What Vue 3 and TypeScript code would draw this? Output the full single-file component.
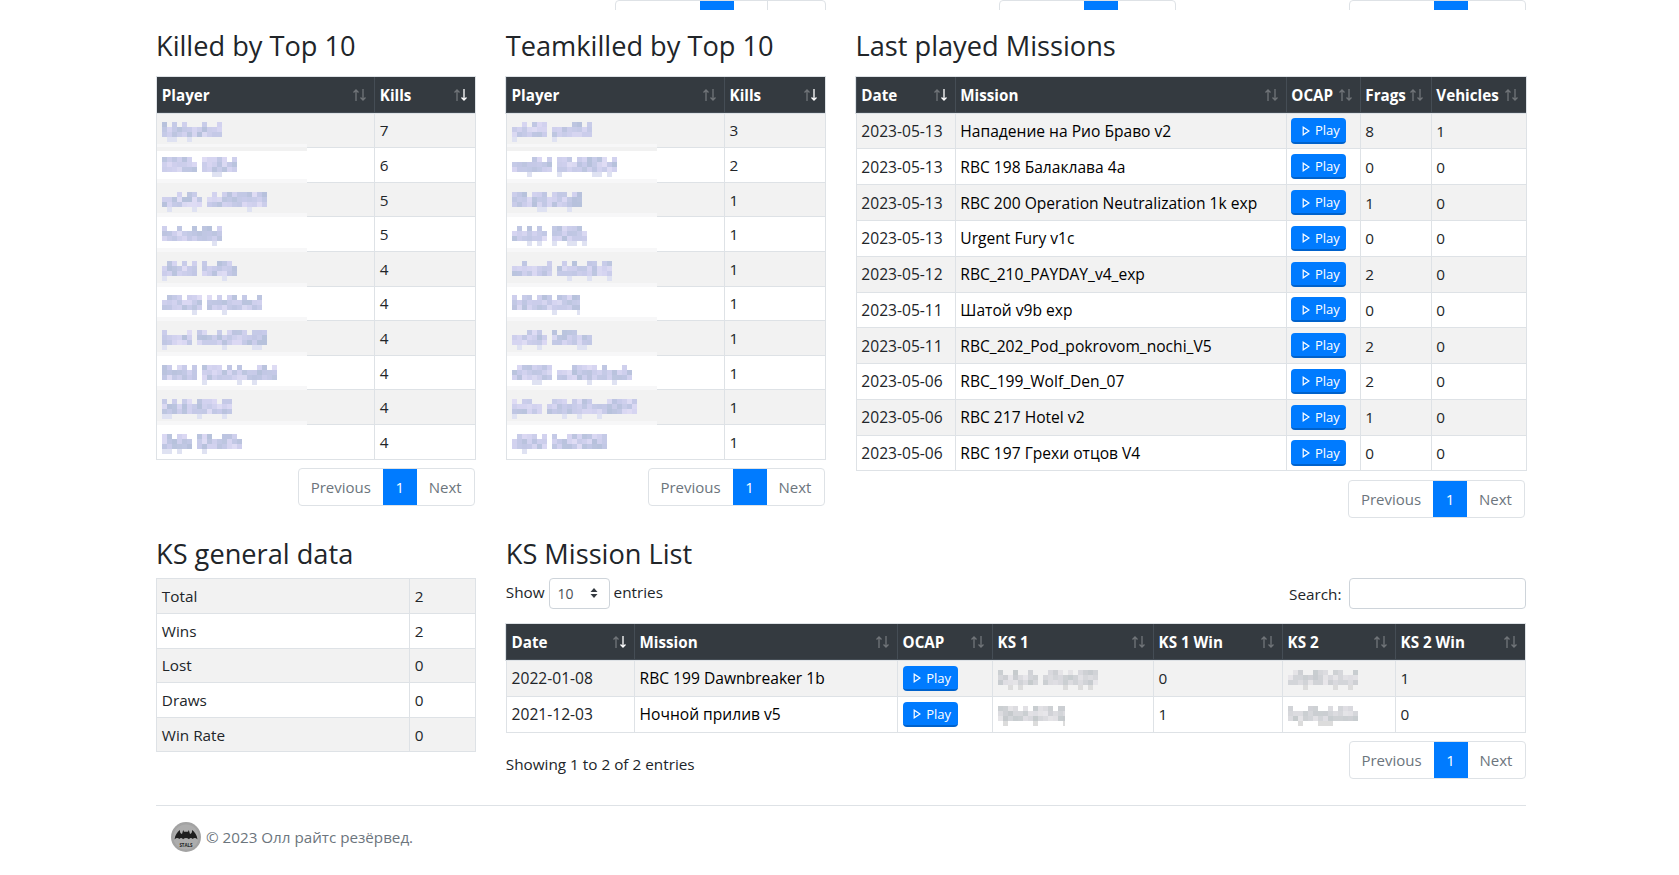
<template>
  <div class="page">
    <!-- bottom edge of the paginations from the row above (page is scrolled) -->
    <div class="top-row">
      <div></div>
      <div class="top-cell"><nav class="pager"><span class="pg prev"></span><span class="pg num active"></span><span class="pg num"></span><span class="pg next"></span></nav></div>
      <div class="top-cell"><nav class="pager"><span class="pg prev"></span><span class="pg num active"></span><span class="pg next"></span></nav></div>
      <div class="top-cell"><nav class="pager"><span class="pg prev"></span><span class="pg num active"></span><span class="pg next"></span></nav></div>
    </div>

    <div class="row-one">
      <section v-for="board in boards" :key="board.title">
        <h3>{{ board.title }}</h3>
        <table class="dt">
          <colgroup><col style="width: 218px" /><col /></colgroup>
          <thead>
            <tr>
              <th v-for="col in ['Player', 'Kills']" :key="col">
                <div class="th-in">
                  <span>{{ col }}</span>
                  <svg class="sort" viewBox="0 0 13 12" width="13" height="12">
                    <path class="dim" d="M3 12V1M.5 3.5 3 1l2.5 2.5" />
                    <path :class="col === 'Kills' ? 'lit' : 'dim'" d="M10 0v11M7.5 8.5 10 11l2.5-2.5" />
                  </svg>
                </div>
              </th>
            </tr>
          </thead>
          <tbody>
            <tr v-for="(row, i) in board.rows" :key="i">
              <td class="name" :class="{ band: i < 9, grey: i === 1 }">
                <svg class="mosaic" :width="row.w" height="24">
                  <rect v-for="(c, k) in mosaic(row.w, i + board.seed, false)" :key="k" :x="c.x" :y="c.y" width="5" height="5" :fill="c.fill" />
                </svg>
              </td>
              <td>{{ row.kills }}</td>
            </tr>
          </tbody>
        </table>
        <div class="pager-row">
          <nav class="pager"><span class="pg prev">Previous</span><span class="pg num active">1</span><span class="pg next">Next</span></nav>
        </div>
      </section>

      <section>
        <h3>Last played Missions</h3>
        <table class="dt tall">
          <colgroup><col v-for="col in missionCols" :key="col.label" :style="{ width: col.width + 'px' }" /></colgroup>
          <thead>
            <tr>
              <th v-for="col in missionCols" :key="col.label">
                <div class="th-in">
                  <span>{{ col.label }}</span>
                  <svg class="sort" viewBox="0 0 13 12" width="13" height="12">
                    <path class="dim" d="M3 12V1M.5 3.5 3 1l2.5 2.5" />
                    <path :class="col.label === 'Date' ? 'lit' : 'dim'" d="M10 0v11M7.5 8.5 10 11l2.5-2.5" />
                  </svg>
                </div>
              </th>
            </tr>
          </thead>
          <tbody>
            <tr v-for="m in missions" :key="m.name">
              <td class="date">{{ m.date }}</td>
              <td class="mission">{{ m.name }}</td>
              <td>
                <a class="play">
                  <svg viewBox="0 0 8 10" width="8" height="10"><path d="M1.2 1.2v7.6L7 5z" /></svg>
                  Play
                </a>
              </td>
              <td>{{ m.frags }}</td>
              <td>{{ m.vehicles }}</td>
            </tr>
          </tbody>
        </table>
        <div class="pager-row wide">
          <nav class="pager"><span class="pg prev">Previous</span><span class="pg num active">1</span><span class="pg next">Next</span></nav>
        </div>
      </section>
    </div>

    <div class="row-two">
      <section>
        <h3 class="tight">KS general data</h3>
        <table class="dt">
          <colgroup><col style="width: 253px" /><col /></colgroup>
          <tbody>
            <tr v-for="g in general" :key="g.label">
              <td>{{ g.label }}</td>
              <td>{{ g.value }}</td>
            </tr>
          </tbody>
        </table>
      </section>

      <section>
        <h3 class="tight">KS Mission List</h3>
        <div class="controls">
          <label class="length">
            <span class="lbl">Show</span>
            <span class="select-wrap">
              <select><option>10</option></select>
              <svg viewBox="0 0 8 12" width="8" height="12"><path d="M4 1 7.500 5h-7zM4 11 .5 7h7z" /></svg>
            </span>
            <span class="lbl">entries</span>
          </label>
          <label class="search">Search: <input type="text" /></label>
        </div>
        <table class="dt tall ks">
          <colgroup><col v-for="col in ksCols" :key="col.label" :style="{ width: col.width + 'px' }" /></colgroup>
          <thead>
            <tr>
              <th v-for="col in ksCols" :key="col.label">
                <div class="th-in">
                  <span>{{ col.label }}</span>
                  <svg class="sort" viewBox="0 0 13 12" width="13" height="12">
                    <path class="dim" d="M3 12V1M.5 3.5 3 1l2.5 2.5" />
                    <path :class="col.label === 'Date' ? 'lit' : 'dim'" d="M10 0v11M7.5 8.5 10 11l2.5-2.5" />
                  </svg>
                </div>
              </th>
            </tr>
          </thead>
          <tbody>
            <tr v-for="(k, i) in ksRows" :key="k.name">
              <td class="date">{{ k.date }}</td>
              <td class="mission">{{ k.name }}</td>
              <td>
                <a class="play">
                  <svg viewBox="0 0 8 10" width="8" height="10"><path d="M1.2 1.2v7.6L7 5z" /></svg>
                  Play
                </a>
              </td>
              <td class="name">
                <svg class="mosaic" :width="k.w1" height="24">
                  <rect v-for="(c, n) in mosaic(k.w1, i + 41, true)" :key="n" :x="c.x" :y="c.y" width="5" height="5" :fill="c.fill" />
                </svg>
              </td>
              <td>{{ k.win1 }}</td>
              <td class="name">
                <svg class="mosaic" :width="k.w2" height="24">
                  <rect v-for="(c, n) in mosaic(k.w2, i + 57, true)" :key="n" :x="c.x" :y="c.y" width="5" height="5" :fill="c.fill" />
                </svg>
              </td>
              <td>{{ k.win2 }}</td>
            </tr>
          </tbody>
        </table>
        <div class="table-foot">
          <div class="info">Showing 1 to 2 of 2 entries</div>
          <nav class="pager"><span class="pg prev">Previous</span><span class="pg num active">1</span><span class="pg next">Next</span></nav>
        </div>
      </section>
    </div>

    <hr />
    <footer>
      <svg class="logo" viewBox="0 0 30 30" width="30" height="30">
        <circle cx="15" cy="15" r="15" fill="#a3a3a3" />
        <circle cx="15" cy="15" r="12.6" fill="#adadad" />
        <path d="M3.500 17.500C4 13 6.500 9.500 9 8 8.700 10 9.500 11.800 11 12L12.200 8 13 9.700h4l.8-1.700L19 12c1.500-.2 2.300-2 2-4 2.500 1.500 5 5 5.500 9.500-1.500-1.800-3.500-2-4.800-.6-1.200-1.300-2.700-1.200-3.700.3-1-.8-2-1.100-3-1.100s-2 .3-3 1.100c-1-1.500-2.500-1.600-3.700-.3C7 15.500 5 15.700 3.500 17.500z" fill="#1f1f1f" />
        <text x="15" y="24.500" text-anchor="middle" class="logo-text">STALS</text>
      </svg>
      <span>© 2023 Олл райтс резёрвед.</span>
    </footer>
  </div>
</template>

<script setup lang="ts">
interface MissionRow {
  date: string
  name: string
  frags: number
  vehicles: number
}

const killedWidths = [60, 75, 105, 60, 75, 100, 105, 115, 70, 80]
const killedCounts = [7, 6, 5, 5, 4, 4, 4, 4, 4, 4]
const teamWidths = [80, 105, 70, 75, 100, 68, 80, 120, 125, 95]
const teamCounts = [3, 2, 1, 1, 1, 1, 1, 1, 1, 1]

const boards = [
  { title: 'Killed by Top 10', seed: 3, rows: killedWidths.map((w, i) => ({ w, kills: killedCounts[i] })) },
  { title: 'Teamkilled by Top 10', seed: 19, rows: teamWidths.map((w, i) => ({ w, kills: teamCounts[i] })) }
]

const missionCols = [
  { label: 'Date', width: 99 },
  { label: 'Mission', width: 331 },
  { label: 'OCAP', width: 74 },
  { label: 'Frags', width: 71 },
  { label: 'Vehicles', width: 95 }
]

const missions: MissionRow[] = [
  { date: '2023-05-13', name: 'Нападение на Рио Браво v2', frags: 8, vehicles: 1 },
  { date: '2023-05-13', name: 'RBC 198 Балаклава 4а', frags: 0, vehicles: 0 },
  { date: '2023-05-13', name: 'RBC 200 Operation Neutralization 1k exp', frags: 1, vehicles: 0 },
  { date: '2023-05-13', name: 'Urgent Fury v1c', frags: 0, vehicles: 0 },
  { date: '2023-05-12', name: 'RBC_210_PAYDAY_v4_exp', frags: 2, vehicles: 0 },
  { date: '2023-05-11', name: 'Шатой v9b exp', frags: 0, vehicles: 0 },
  { date: '2023-05-11', name: 'RBC_202_Pod_pokrovom_nochi_V5', frags: 2, vehicles: 0 },
  { date: '2023-05-06', name: 'RBC_199_Wolf_Den_07', frags: 2, vehicles: 0 },
  { date: '2023-05-06', name: 'RBC 217 Hotel v2', frags: 1, vehicles: 0 },
  { date: '2023-05-06', name: 'RBC 197 Грехи отцов V4', frags: 0, vehicles: 0 }
]

const general = [
  { label: 'Total', value: 2 },
  { label: 'Wins', value: 2 },
  { label: 'Lost', value: 0 },
  { label: 'Draws', value: 0 },
  { label: 'Win Rate', value: 0 }
]

const ksCols = [
  { label: 'Date', width: 128 },
  { label: 'Mission', width: 263 },
  { label: 'OCAP', width: 95 },
  { label: 'KS 1', width: 161 },
  { label: 'KS 1 Win', width: 129 },
  { label: 'KS 2', width: 113 },
  { label: 'KS 2 Win', width: 130 }
]

const ksRows = [
  { date: '2022-01-08', name: 'RBC 199 Dawnbreaker 1b', w1: 100, win1: 0, w2: 70, win2: 1 },
  { date: '2021-12-03', name: 'Ночной прилив v5', w1: 67, win1: 1, w2: 70, win2: 0 }
]

// pixelated blur over player names: 5px cells, seeded so it stays stable
const mosaic = (width: number, seed: number, grey: boolean) => {
  let s = seed * 7919 + width
  const next = () => {
    s = (s * 16807) % 2147483647
    return (s % 1000) / 1000
  }
  const gapAt = width > 70 ? 30 + (seed % 3) * 5 : -100
  const cells: { x: number; y: number; fill: string }[] = []
  for (let x = 0; x < width; x += 5) {
    if (x === gapAt) continue
    for (let y = 4; y < 19; y += 5) {
      if (y === 4 && next() > 0.6) continue
      const r = next()
      const light = 79 + Math.round(r * 12)
      const fill = grey
        ? `hsl(${200 + Math.round(r * 60)}, 7%, ${light}%)`
        : `hsl(${222 + Math.round(r * 24)}, ${34 + Math.round(r * 18)}%, ${light}%)`
      cells.push({ x, y, fill })
    }
    if (next() > 0.8) {
      cells.push({ x, y: 19, fill: grey ? '#dcdcdc' : '#dfe2f2' })
    }
  }
  return cells
}
</script>

<style>
html,
body {
  margin: 0;
  background: #fff;
  overflow: hidden;
}
</style>

<style scoped>
.page {
  width: 1369.5px;
  margin-left: 156px;
  font-family: "Open Sans", "Noto Sans", sans-serif;
  font-size: 15.3px;
  line-height: 24px;
  color: #212529;
}

.top-row {
  display: grid;
  grid-template-columns: repeat(4, 1fr);
  column-gap: 30px;
  height: 10px;
  overflow: hidden;
}

.top-cell {
  display: flex;
  justify-content: flex-end;
  align-items: flex-end;
}

.row-one {
  display: grid;
  grid-template-columns: 319.75px 319.75px 669.5px;
  column-gap: 30px;
  margin-top: 19px;
}

.row-two {
  display: grid;
  grid-template-columns: 319.75px 1019.75px;
  column-gap: 30px;
  margin-top: 19px;
}

h3 {
  margin: 0 0 13px;
  font-size: 27.2px;
  font-weight: 400;
  line-height: 34px;
}

h3.tight {
  margin-bottom: 7px;
}

.dt {
  width: 100%;
  table-layout: fixed;
  border-collapse: collapse;
  border: 1px solid #dee2e6;
}

.dt th {
  padding: 6.3px 4.8px 4.3px;
  background: #343a40;
  border: 1px solid #454d55;
  border-bottom-width: 2px;
  color: #fff;
  font-size: 15.2px;
  font-weight: 700;
  text-align: left;
}

.dt thead tr {
  outline: 1px solid #dee2e6;
}

.dt.ks th {
  padding: 6px 4.8px 4.6px;
}

.th-in {
  display: flex;
  justify-content: space-between;
  align-items: center;
  padding-right: 3px;
  white-space: nowrap;
}

.sort {
  flex: none;
  fill: none;
  stroke-width: 1.3;
}

.sort .dim {
  stroke: rgba(255, 255, 255, 0.3);
}

.sort .lit {
  stroke: #fff;
}

.dt td {
  padding: 4.8px;
  border: 1px solid #dee2e6;
  white-space: nowrap;
  overflow: hidden;
}

.dt tbody tr:nth-child(odd) td {
  background: #f2f2f2;
}

.name {
  position: relative;
  overflow: visible !important;
}

.mosaic {
  display: block;
}

.name.band::after {
  content: "";
  position: absolute;
  left: 0;
  bottom: -1px;
  width: 150px;
  height: 4px;
  background: #f7f7f8;
  z-index: 1;
}

.name.grey::before {
  content: "";
  position: absolute;
  left: 0;
  top: -1px;
  width: 150px;
  height: 4px;
  background: #f1f1f1;
  z-index: 1;
}

.date,
.mission {
  font-size: 15.6px;
}

.mission {
  color: #000;
  font-weight: 500;
}

.play {
  display: flex;
  align-items: center;
  justify-content: center;
  gap: 5px;
  box-sizing: border-box;
  width: 55px;
  height: 25.2px;
  padding: 2px 0 0 4px;
  background: #007bff;
  border-bottom: 2px solid #0062cc;
  border-radius: 4px;
  color: #fff;
  font-size: 13px;
  line-height: 1;
}

.play svg {
  fill: none;
  stroke: #fff;
  stroke-width: 1.2;
}

.pager-row {
  display: flex;
  justify-content: flex-end;
  margin-top: 8px;
  padding-right: 1px;
}

.pager-row.wide {
  margin-top: 9px;
  padding-right: 0;
}

.pager {
  display: flex;
  flex: none;
  height: 38px;
  box-sizing: border-box;
  border: 1px solid #dee2e6;
  border-radius: 4px;
  overflow: hidden;
  font-size: 15px;
  color: #6c757d;
}

.pg {
  display: flex;
  align-items: center;
  justify-content: center;
  box-sizing: border-box;
}

.pg.prev {
  width: 84px;
}

.pg.num {
  width: 34px;
}

.pg.num + .pg.num {
  border-right: 1px solid #dee2e6;
}

.pg.next {
  width: 57px;
}

.pg.active {
  background: #007bff;
  color: #fff;
}

.controls {
  display: flex;
  justify-content: space-between;
  height: 31px;
  margin-bottom: 14px;
}

.length,
.search {
  display: flex;
  align-items: center;
  gap: 4px;
}

.length .lbl {
  padding-bottom: 3px;
}

.select-wrap {
  position: relative;
  display: block;
}

.select-wrap select {
  display: block;
  appearance: none;
  box-sizing: border-box;
  width: 61px;
  height: 31px;
  padding: 2px 8px;
  border: 1px solid #ced4da;
  border-radius: 4px;
  background: #fff;
  color: #495057;
  font-family: inherit;
  font-size: 14px;
}

.select-wrap svg {
  position: absolute;
  right: 12px;
  top: 9px;
  fill: #343a40;
}

.search input {
  box-sizing: border-box;
  width: 177px;
  height: 31px;
  border: 1px solid #ced4da;
  border-radius: 4px;
  background: #fff;
  margin-left: 3px;
}

.table-foot {
  display: flex;
  justify-content: space-between;
  margin-top: 8px;
}

.info {
  padding-top: 11px;
}

hr {
  margin: 26px 0 0;
  border: 0;
  border-top: 1px solid #dee2e6;
}

footer {
  display: flex;
  align-items: center;
  gap: 5px;
  padding: 16px 0 0 15px;
  font-size: 15.2px;
  color: #6c757d;
}

.logo {
  flex: none;
}

.logo-text {
  font-size: 4.5px;
  font-weight: 700;
  fill: #1f1f1f;
}
</style>
